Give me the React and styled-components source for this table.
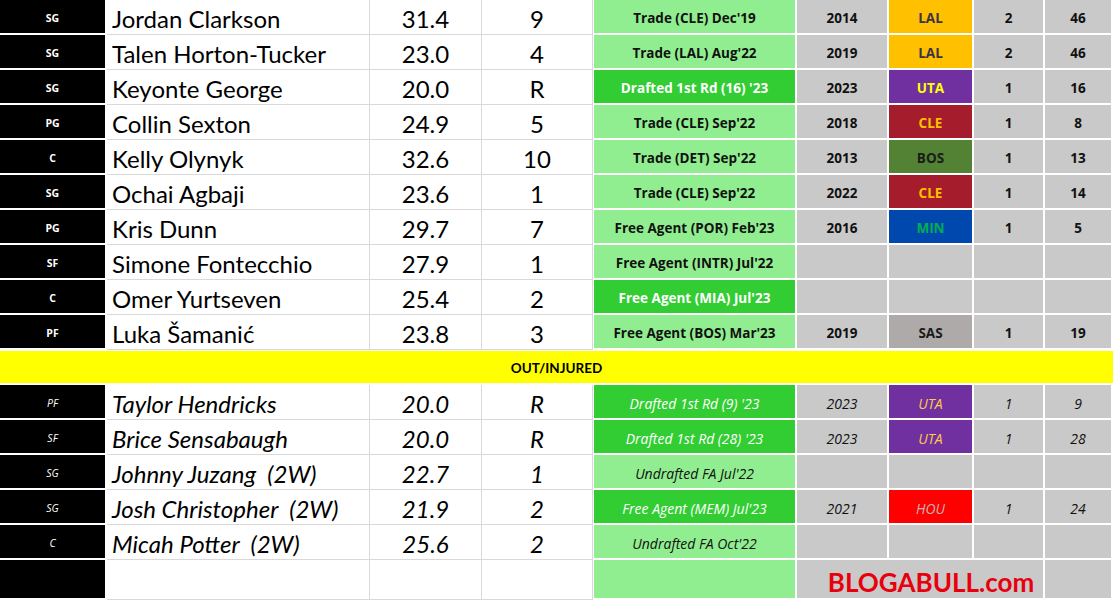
import React from "react";
import styled, { createGlobalStyle, css } from "styled-components";

const GlobalStyle = createGlobalStyle`
  html, body { margin: 0; padding: 0; background: #ffffff; }
  body { font-family: Lato, "Open Sans", sans-serif; }
`;

const LIGHT = "#90ee90";
const LIME = "#32cd32";
const GRAY = "#c9c9c9";
const SMALL = `"Open Sans", Lato, sans-serif`;

const Sheet = styled.div`
  display: grid;
  grid-template-columns: 107px 263px 112px 111px 204px 92px 85px 71px 68px;
  grid-template-rows: repeat(16, 35px) 1fr;
  width: 1113px;
  height: 600px;
  overflow: hidden;
  background: #ffffff;
`;

const Cell = styled.div`
  display: flex;
  align-items: center;
  justify-content: center;
  box-sizing: border-box;
  padding-top: 4px;
  line-height: 1;
  white-space: pre;
  overflow: hidden;
  min-width: 0;
`;

const filled = css`
  border-right: 2px solid #ffffff;
  border-bottom: 2px solid #ffffff;
`;

const plain = css`
  border-right: 1px solid #d9d9d9;
  border-bottom: 1px solid #d9d9d9;
`;

const smallText = css`
  font-family: ${SMALL};
  font-size: ${(p) => (p.$out ? "14px" : "13.5px")};
  font-weight: ${(p) => (p.$out ? 400 : 700)};
  font-style: ${(p) => (p.$out ? "italic" : "normal")};
  padding-top: 5px;
`;

const PosCell = styled(Cell)`
  ${filled}
  background: #000000;
  color: #ffffff;
  font-family: ${SMALL};
  font-size: 10.5px;
  font-weight: ${(p) => (p.$out ? 400 : 700)};
  font-style: ${(p) => (p.$out ? "italic" : "normal")};
`;

const NameCell = styled(Cell)`
  ${plain}
  justify-content: flex-start;
  padding-left: 5px;
  color: #000000;
  font-size: 24px;
  font-style: ${(p) => (p.$out ? "italic" : "normal")};
`;

const NumCell = styled(Cell)`
  ${plain}
  color: #000000;
  font-size: 24px;
  font-style: ${(p) => (p.$out ? "italic" : "normal")};
`;

const AcqCell = styled(Cell)`
  ${filled}
  ${smallText}
  border-left: 1px solid #ffffff;
  background: ${(p) => (p.$tone === "lime" ? LIME : LIGHT)};
  color: ${(p) => (p.$tone === "lime" ? "#ffffff" : "#111111")};
`;

const GrayCell = styled(Cell)`
  ${filled}
  ${smallText}
  background: ${GRAY};
  color: #111111;
`;

const TeamCell = styled(GrayCell)`
  background: ${(p) => p.$bg};
  color: ${(p) => p.$fg};
`;

const Banner = styled(Cell)`
  grid-column: 1 / -1;
  background: #ffff00;
  border-bottom: 2px solid #ffffff;
  border-top: 1px solid #ffffff;
  color: #000000;
  font-size: 13.5px;
  font-weight: 700;
`;

const Brand = styled(Cell)`
  ${filled}
  grid-column: span 3;
  background: ${GRAY};
  color: #e8000d;
  font-size: 26px;
  font-weight: 700;
  padding-left: 22px;
  padding-top: 5px;
`;

const TEAMS = {
  LAL: { bg: "#ffc000", fg: "#3b3346" },
  UTA: { bg: "#7030a0", fg: "#ffff00" },
  UTA_I: { bg: "#7030a0", fg: "#ffc94a" },
  CLE: { bg: "#a51d2d", fg: "#ffc000" },
  BOS: { bg: "#548235", fg: "#1b1b1b" },
  MIN: { bg: "#0048ad", fg: "#00b050" },
  SAS: { bg: "#aeaaaa", fg: "#1b1b1b" },
  HOU: { bg: "#ff0000", fg: "#d0b0b0" },
};

const active = [
  ["SG", "Jordan Clarkson", "31.4", "9", "Trade (CLE) Dec'19", "light", "2014", "LAL", "2", "46"],
  ["SG", "Talen Horton-Tucker", "23.0", "4", "Trade (LAL) Aug'22", "light", "2019", "LAL", "2", "46"],
  ["SG", "Keyonte George", "20.0", "R", "Drafted 1st Rd (16) '23", "lime", "2023", "UTA", "1", "16"],
  ["PG", "Collin Sexton", "24.9", "5", "Trade (CLE) Sep'22", "light", "2018", "CLE", "1", "8"],
  ["C", "Kelly Olynyk", "32.6", "10", "Trade (DET) Sep'22", "light", "2013", "BOS", "1", "13"],
  ["SG", "Ochai Agbaji", "23.6", "1", "Trade (CLE) Sep'22", "light", "2022", "CLE", "1", "14"],
  ["PG", "Kris Dunn", "29.7", "7", "Free Agent (POR) Feb'23", "light", "2016", "MIN", "1", "5"],
  ["SF", "Simone Fontecchio", "27.9", "1", "Free Agent (INTR) Jul'22", "light", "", "", "", ""],
  ["C", "Omer Yurtseven", "25.4", "2", "Free Agent (MIA) Jul'23", "lime", "", "", "", ""],
  ["PF", "Luka Šamanić", "23.8", "3", "Free Agent (BOS) Mar'23", "light", "2019", "SAS", "1", "19"],
];

const injured = [
  ["PF", "Taylor Hendricks", "20.0", "R", "Drafted 1st Rd (9) '23", "lime", "2023", "UTA_I", "1", "9"],
  ["SF", "Brice Sensabaugh", "20.0", "R", "Drafted 1st Rd (28) '23", "lime", "2023", "UTA_I", "1", "28"],
  ["SG", "Johnny Juzang  (2W)", "22.7", "1", "Undrafted FA Jul'22", "light", "", "", "", ""],
  ["SG", "Josh Christopher  (2W)", "21.9", "2", "Free Agent (MEM) Jul'23", "lime", "2021", "HOU", "1", "24"],
  ["C", "Micah Potter  (2W)", "25.6", "2", "Undrafted FA Oct'22", "light", "", "", "", ""],
];

function PlayerRow({ row, out }) {
  const [pos, name, age, exp, acq, tone, year, team, rd, pick] = row;
  const t = TEAMS[team];
  return (
    <>
      <PosCell $out={out}>{pos}</PosCell>
      <NameCell $out={out}>{name}</NameCell>
      <NumCell $out={out}>{age}</NumCell>
      <NumCell $out={out}>{exp}</NumCell>
      <AcqCell $out={out} $tone={tone}>{acq}</AcqCell>
      <GrayCell $out={out}>{year}</GrayCell>
      {t ? (
        <TeamCell $out={out} $bg={t.bg} $fg={t.fg}>
          {team.replace("_I", "")}
        </TeamCell>
      ) : (
        <GrayCell $out={out} />
      )}
      <GrayCell $out={out}>{rd}</GrayCell>
      <GrayCell $out={out}>{pick}</GrayCell>
    </>
  );
}

export default function App() {
  return (
    <>
      <GlobalStyle />
      <Sheet>
        {active.map((r) => (
          <PlayerRow key={r[1]} row={r} />
        ))}
        <Banner>OUT/INJURED</Banner>
        {injured.map((r) => (
          <PlayerRow key={r[1]} row={r} out />
        ))}
        <PosCell />
        <NameCell />
        <NumCell />
        <NumCell />
        <AcqCell $tone="light" />
        <Brand>BLOGABULL.com</Brand>
        <GrayCell />
      </Sheet>
    </>
  );
}
